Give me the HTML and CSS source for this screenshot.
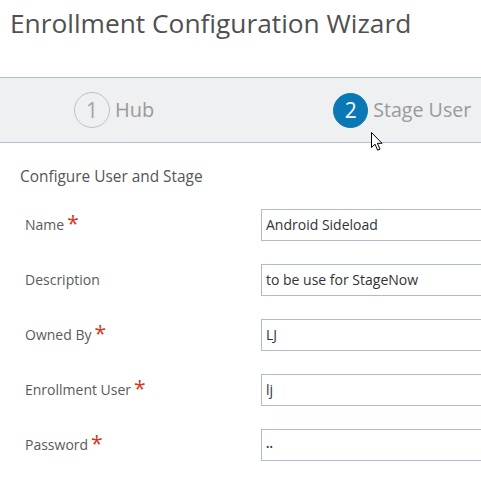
FILE: index.html
```html
<!DOCTYPE html>
<html>
<head>
<meta charset="utf-8">
<link rel="stylesheet" href="styles.css">
</head>
<body>
<h1 class="title">Enrollment Configuration Wizard</h1>
<div class="steps">
  <div class="step">
    <span class="circle">1</span>
    <span class="step-label">Hub</span>
  </div>
  <div class="step step-active">
    <span class="circle circle-active">2</span>
    <span class="step-label step-label-active">Stage User</span>
  </div>
  <svg class="cursor" width="14" height="21" viewBox="0 0 14 21">
    <path d="M1.5 1.5 L1.5 16.5 L5 13.2 L7.6 19.2 L10 18.2 L7.4 12.3 L12 12.3 Z" fill="#fff" stroke="#000" stroke-width="1" stroke-linejoin="miter"/>
  </svg>
</div>
<section class="form">
  <h2 class="form-title">Configure User and Stage</h2>
  <div class="row">
    <label class="label">Name<span class="req">*</span></label>
    <div class="input">Android Sideload</div>
  </div>
  <div class="row">
    <label class="label">Description</label>
    <div class="input">to be use for StageNow</div>
  </div>
  <div class="row">
    <label class="label">Owned By<span class="req">*</span></label>
    <div class="input">LJ</div>
  </div>
  <div class="row">
    <label class="label">Enrollment User<span class="req">*</span></label>
    <div class="input">lj</div>
  </div>
  <div class="row">
    <label class="label">Password<span class="req">*</span></label>
    <div class="input"><span class="pw">••</span></div>
  </div>
</section>
</body>
</html>
```

FILE: styles.css
```css
html, body {
  margin: 0;
  padding: 0;
  overflow: hidden;
  background: #fff;
}
body {
  font-family: "Open Sans", "Noto Sans", sans-serif;
  color: #555;
}
.title {
  margin: 5px 0 0 10px;
  font-size: 26.3px;
  line-height: 36px;
  font-weight: 400;
  color: #505050;
  white-space: nowrap;
}
.steps {
  position: relative;
  margin-top: 36px;
  height: 64px;
  background: #eef0f2;
  border-top: 1px solid #b5c1cd;
  border-bottom: 1px solid #b5c1cd;
  display: flex;
  align-items: center;
  padding-left: 74px;
  gap: 179px;
}
.step {
  display: flex;
  align-items: center;
  gap: 5px;
  flex: none;
}
.circle {
  box-sizing: border-box;
  width: 36px;
  height: 36px;
  border-radius: 50%;
  border: 1px solid #b7c3cf;
  display: flex;
  align-items: center;
  justify-content: center;
  font-size: 21px;
  color: #a5a5a5;
}
.circle-active {
  width: 35px;
  height: 35px;
  background: #0b78b6;
  border-color: #0b78b6;
  color: #fff;
}
.step-label {
  font-size: 20px;
  color: #9a9a9a;
  line-height: 28px;
  white-space: nowrap;
}
.step-label-active {
  font-size: 19.6px;
}
.cursor {
  position: absolute;
  left: 370px;
  top: 53px;
}
.form {
  padding: 23px 0 0 20px;
}
.form-title {
  margin: 0 0 22px 0;
  font-size: 15.4px;
  line-height: 21px;
  font-weight: 400;
  color: #555;
  white-space: nowrap;
}
.row {
  display: flex;
  align-items: center;
  margin-bottom: 23px;
}
.label {
  flex: none;
  width: 241px;
  padding-left: 5px;
  box-sizing: border-box;
  font-size: 14px;
  line-height: 20px;
  color: #5a5a5a;
  white-space: nowrap;
}
.req {
  color: #d6361f;
  font-size: 21px;
  margin-left: 3px;
  position: relative;
  top: 1px;
  line-height: 0;
}
.input {
  box-sizing: border-box;
  flex: 1;
  min-width: 0;
  height: 32px;
  border: 1px solid #aebccb;
  border-right: none;
  padding-left: 4px;
  font-size: 14px;
  line-height: 30px;
  color: #333;
  white-space: nowrap;
  overflow: hidden;
}
.pw {
  font-size: 9px;
  letter-spacing: 0;
  color: #333;
}
```
